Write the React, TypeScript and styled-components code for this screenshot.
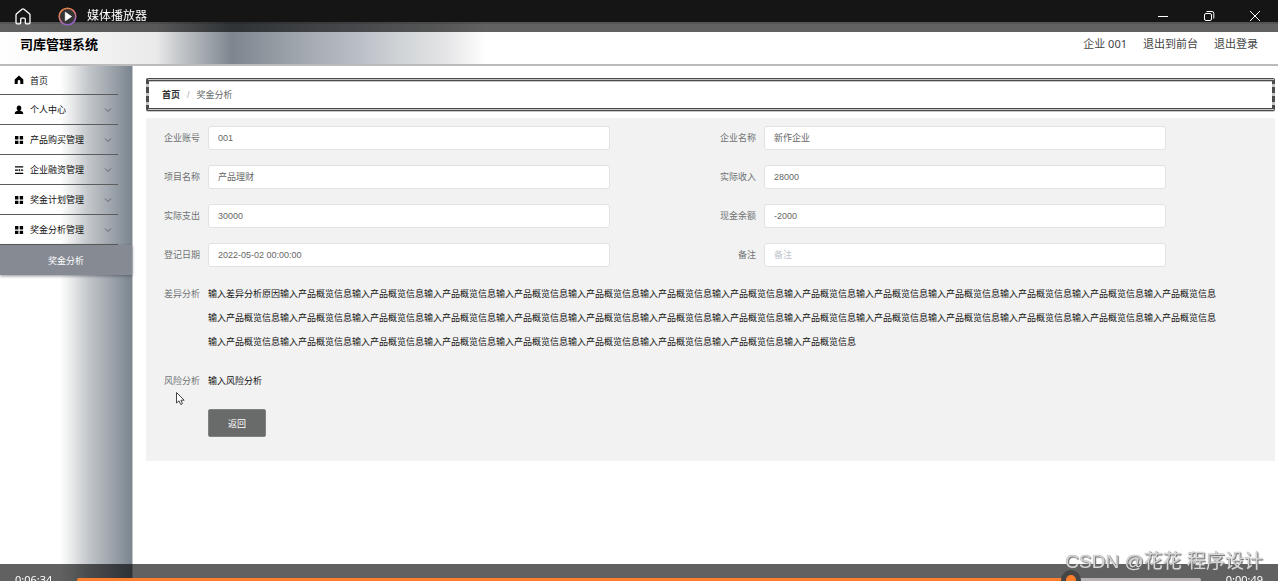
import React from "react";
import styled, { createGlobalStyle } from "styled-components";

const cjk = '"Noto Sans", "Noto Sans CJK SC", sans-serif';
const arial = '"Liberation Sans", "Noto Sans CJK SC", sans-serif';

const GlobalStyle = createGlobalStyle`
  *, *::before, *::after { box-sizing: border-box; }
  body { margin: 0; background: #fff; font-family: ${arial}; font-size: 9px; color: #222; }
  button, input { font: inherit; }
  a { color: inherit; text-decoration: none; }
`;

const Page = styled.div`
  display: flex;
  flex-direction: column;
  min-height: 100vh;
`;

/* ---------- media player window chrome ---------- */

const TitleBar = styled.div`
  position: fixed;
  inset: 0 0 auto 0;
  z-index: 2;
  display: flex;
  align-items: center;
  height: 32px;
  padding: 0 17px 0 15px;
  color: #fff;
  font: 12px/32px ${cjk};
  background: linear-gradient(#151515 22px, rgba(0, 0, 0, 0.67) 22px, rgba(0, 0, 0, 0.67) 24px, rgba(0, 0, 0, 0.62) 24px);
`;

const ChromeButton = styled.button`
  display: flex;
  padding: 0;
  border: 0;
  background: none;
  color: #fff;
`;

const AppName = styled.div`
  display: flex;
  align-items: center;
  gap: 10px;
  margin-left: 27px;
`;

const WindowButtons = styled.div`
  display: flex;
  gap: 34px;
  margin-left: auto;
`;

const PlayerBar = styled.div`
  position: fixed;
  inset: auto 0 0 0;
  z-index: 2;
  height: 17px;
  overflow: hidden;
  color: #fff;
  background: rgba(0, 0, 0, 0.62);
`;

const PlayerControls = styled.div`
  display: flex;
  align-items: center;
  height: 32px;
  padding: 0 15px;
  font: 11px/16px ${cjk};
`;

const Time = styled.span<{ $end?: boolean }>`
  width: 62px;
  text-align: ${(p) => (p.$end ? "right" : "left")};
`;

const Seek = styled.input`
  appearance: none;
  flex: 1;
  min-width: 0;
  height: 4px;
  margin: 0;
  border-radius: 2px;
  background: linear-gradient(90deg, #ff7e2d 88%, #b7b3b3 88%);

  &::-webkit-slider-thumb {
    appearance: none;
    width: 20px;
    height: 20px;
    border: 5px solid #454545;
    border-radius: 50%;
    background: #ff7e2d;
  }
`;

const Watermark = styled.div`
  position: fixed;
  right: 15px;
  bottom: 6px;
  z-index: 3;
  font: 19px/26px ${arial};
  color: #d6d6d6;
  text-shadow: 1px 1px 1px #666, 0 0 1px #888;
`;

const Pointer = styled.svg`
  position: fixed;
  left: 175px;
  top: 391px;
  z-index: 3;
`;

/* ---------- site header ---------- */

const Header = styled.header`
  display: flex;
  align-items: center;
  justify-content: space-between;
  height: 66px;
  padding: 24px 20px 0;
  border-bottom: 2px solid #bbb;
  background: linear-gradient(
    90deg, #fff 0, #f3f3f3 90px, #eaeaea 156px, #c3c7ca 180px, #7d868f 232px,
    #aab0b6 320px, #b6bbc4 350px, #d2d6d8 405px, #e4e4e6 445px, #fff 486px
  );
`;

const SiteTitle = styled.h1`
  margin: 0;
  font: bold 13px/20px ${cjk};
  color: #000;
`;

const HeaderLinks = styled.nav`
  display: flex;
  gap: 16px;
  font: 11px/20px ${cjk};
  color: #444;
`;

const Body = styled.div`
  display: flex;
  flex: 1;
`;

/* ---------- side menu ---------- */

const Sidebar = styled.nav`
  flex: none;
  width: 133px;
  border-right: 1px solid #c3c8cc;
  background: linear-gradient(90deg, #fff 60px, #e3e5e6 74px, #c3c7cb 88px, #a3a9b0 108px, #7b858f 132px);
  font-family: ${cjk};
`;

const MenuLink = styled.a`
  display: flex;
  align-items: center;
  gap: 6px;
  width: 118px;
  height: 30px;
  padding: 0 5px 0 14px;
  border-bottom: 1px solid #5c5c5c;
  color: #111;

  &:first-child { height: 29px; }
`;

const Chevron = styled.svg`
  margin-left: auto;
`;

const SubLink = styled.a`
  display: block;
  height: 30px;
  background: #858a93;
  box-shadow: 0 1px 3px rgba(60, 65, 75, 0.6);
  color: #fff;
  line-height: 32px;
  text-align: center;
`;

/* ---------- main area ---------- */

const Main = styled.main`
  flex: 1;
  min-width: 0;
  padding: 12px 3px 0 13px;
`;

const Breadcrumb = styled.nav`
  display: flex;
  align-items: center;
  gap: 7px;
  height: 33px;
  margin-bottom: 7px;
  padding: 0 13px;
  border: 3px #4b4b4b;
  border-style: double dashed;
  border-radius: 2px;
  background: linear-gradient(#fff, #fff) padding-box, #c4c4c4 border-box;
  box-shadow: inset 0 1px #c8c8c8, 0 1px #c8c8c8;
  color: #666;

  a { font-weight: bold; color: #303133; }
  span { color: #aaa; }
`;

const Panel = styled.form`
  display: flex;
  flex-direction: column;
  gap: 15px;
  padding: 8px 9px 24px 8px;
  background: #f2f2f2;
`;

const Fields = styled.div`
  display: grid;
  grid-template-columns: 1fr 1fr;
  gap: 15px 0;
`;

const Field = styled.div`
  display: grid;
  grid-template-columns: 46px minmax(0, 1fr);
  column-gap: 8px;
  line-height: 24px;
`;

const Label = styled.label`
  color: #707274;
  text-align: right;
  white-space: nowrap;
`;

const TextBox = styled.input`
  width: 80%;
  height: 24px;
  padding: 0 9px;
  border: 1px solid #e1e2e8;
  border-radius: 3px;
  background: #fff;
  color: #666;

  &::placeholder { color: #c0c4cc; }
`;

const Output = styled.output`
  color: #111;
  white-space: pre-line;
`;

const BackButton = styled.button`
  align-self: flex-start;
  width: 58px;
  height: 28px;
  margin: 1px 0 0 54px;
  padding: 0;
  border: 1px solid #808280;
  border-radius: 2px;
  background: #696b6a;
  color: #fff;
`;

type IconName = "home" | "user" | "grid" | "list";

const iconPaths: Record<IconName, string> = {
  home: "M5 .6 9.3 4.4V9H6.3V6.2a1.3 1.3 0 0 0-2.6 0V9H.7V4.4Z",
  user: "M5 .6a2.2 2.5 0 0 1 1.2 4.7c.1.5.6.6 1.5.9C9 6.6 9.2 7.4 9.2 9H.8C.8 7.4 1 6.6 2.3 6.2c.9-.3 1.4-.4 1.5-.9A2.2 2.5 0 0 1 5 .6Z",
  grid: "M1 1h3.4v3.4H1ZM5.7 1h3.4v3.4H5.7ZM1 5.7h3.4v3.4H1ZM5.7 5.7h3.4v3.4H5.7Z",
  list: "M1 1.2h8.2v1.2H1ZM1 4.5h3.4v1.2H1ZM5.2 3.9h1v2.4h-1ZM7 4.5h2.2v1.2H7ZM1 7.8h8.2V9H1Z",
};

const menu: { icon: IconName; text: string }[] = [
  { icon: "home", text: "首页" },
  { icon: "user", text: "个人中心" },
  { icon: "grid", text: "产品购买管理" },
  { icon: "list", text: "企业融资管理" },
  { icon: "grid", text: "奖金计划管理" },
  { icon: "grid", text: "奖金分析管理" },
];

const fields = [
  ["企业账号", "001"],
  ["企业名称", "新作企业"],
  ["项目名称", "产品理财"],
  ["实际收入", "28000"],
  ["实际支出", "30000"],
  ["现金余额", "-2000"],
  ["登记日期", "2022-05-02 00:00:00"],
  ["备注", ""],
];

const phrase = "输入产品概览信息";
const difference = [
  "输入差异分析原因" + phrase.repeat(13),
  phrase.repeat(14),
  phrase.repeat(9),
].join("\n");

export default function App() {
  return (
    <Page>
      <GlobalStyle />
      <TitleBar>
        <ChromeButton aria-label="主页">
          <svg width="16" height="17" viewBox="0 0 16 17" fill="none" stroke="currentColor" strokeWidth="1.3" strokeLinejoin="round">
            <path d="M1 7.2c0-.6.2-1 .6-1.4L7 1.3c.6-.5 1.4-.5 2 0l5.4 4.5c.4.4.6.8.6 1.4v7.3c0 .8-.5 1.3-1.3 1.3h-2.4c-.6 0-1-.4-1-1v-3.6c0-.7-.4-1.1-1-1.1H6.7c-.6 0-1 .4-1 1.1v3.6c0 .6-.4 1-1 1H2.3C1.5 15.800 1 15.300 1 14.500Z" />
          </svg>
        </ChromeButton>
        <AppName>
          <svg width="19" height="19" viewBox="0 0 19 19">
            <defs>
              <linearGradient id="ring" x1="0" y1="0" x2="0.400" y2="1">
                <stop offset="0" stopColor="#f08a35" />
                <stop offset="0.500" stopColor="#d8776f" />
                <stop offset="1" stopColor="#9460c8" />
              </linearGradient>
            </defs>
            <circle cx="9.500" cy="9.500" r="8.300" fill="#353535" stroke="url(#ring)" strokeWidth="1.600" />
            <path d="M7.300 5.300 13.500 9.500 7.300 13.700Z" fill="#fff" stroke="#fff" strokeWidth=".8" strokeLinejoin="round" />
          </svg>
          媒体播放器
        </AppName>
        <WindowButtons>
          <ChromeButton aria-label="最小化">
            <svg width="12" height="12" viewBox="0 0 12 12" stroke="currentColor"><path d="M1 6.500H11" /></svg>
          </ChromeButton>
          <ChromeButton aria-label="还原">
            <svg width="12" height="12" viewBox="0 0 12 12" fill="none" stroke="currentColor">
              <rect x="1.500" y="3.500" width="7" height="7" rx="1.500" />
              <path d="M3.500 1.500H9a1.800 1.800 0 0 1 1.800 1.800V8.500" />
            </svg>
          </ChromeButton>
          <ChromeButton aria-label="关闭">
            <svg width="12" height="12" viewBox="0 0 12 12" stroke="currentColor"><path d="M1 1 11 11M11 1 1 11" /></svg>
          </ChromeButton>
        </WindowButtons>
      </TitleBar>

      <Header>
        <SiteTitle>司库管理系统</SiteTitle>
        <HeaderLinks>
          <span>企业 001</span>
          <a href="#front">退出到前台</a>
          <a href="#logout">退出登录</a>
        </HeaderLinks>
      </Header>

      <Body>
        <Sidebar>
          {menu.map((item, i) => (
            <MenuLink href="#menu" key={item.text}>
              <svg width="10" height="10" viewBox="0 0 10 10" fill="#000"><path d={iconPaths[item.icon]} /></svg>
              {item.text}
              {i > 0 && (
                <Chevron width="10" height="10" viewBox="0 0 10 10" fill="none" stroke="#60666c">
                  <path d="M2 3.500 5 6.500 8 3.500" />
                </Chevron>
              )}
            </MenuLink>
          ))}
          <SubLink href="#analysis" aria-current="page">奖金分析</SubLink>
        </Sidebar>

        <Main>
          <Breadcrumb>
            <a href="#home">首页</a>
            <span>/</span>
            奖金分析
          </Breadcrumb>
          <Panel onSubmit={(e) => e.preventDefault()}>
            <Fields>
              {fields.map(([label, value], i) => (
                <Field key={label}>
                  <Label htmlFor={`field-${i}`}>{label}</Label>
                  <TextBox id={`field-${i}`} readOnly value={value} placeholder={label} />
                </Field>
              ))}
            </Fields>
            <Field>
              <Label htmlFor="difference">差异分析</Label>
              <Output id="difference">{difference}</Output>
            </Field>
            <Field>
              <Label htmlFor="risk">风险分析</Label>
              <Output id="risk">输入风险分析</Output>
            </Field>
            <BackButton type="button">返回</BackButton>
          </Panel>
        </Main>
      </Body>

      <Pointer width="11" height="15" viewBox="0 0 11 15" fill="#fff" stroke="#444" strokeLinejoin="round">
        <path d="M1.500 1.500V12L4 9.800 5.700 13.500 7.500 12.700 5.900 9.200H9.200Z" />
      </Pointer>

      <PlayerBar>
        <PlayerControls>
          <Time>0:06:34</Time>
          <Seek type="range" aria-label="播放进度" min={0} max={443} defaultValue={395} />
          <Time $end>0:00:49</Time>
        </PlayerControls>
      </PlayerBar>
      <Watermark>CSDN @花花 程序设计</Watermark>
    </Page>
  );
}
